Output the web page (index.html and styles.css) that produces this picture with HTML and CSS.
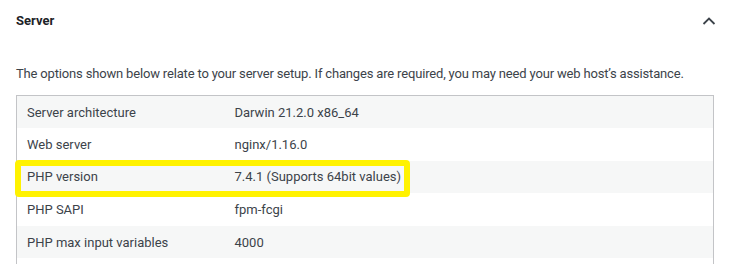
FILE: index.html
```html
<!doctype html>
<html lang="en">
  <head>
    <meta charset="UTF-8" />
    <title>Site Health - Server</title>
    <link rel="stylesheet" href="styles.css">
  </head>
  <body>
    <div class="panel">
      <div class="panel-header">
        <h2 class="panel-title">Server</h2>
        <svg class="chevron" width="14" height="9" viewBox="0 0 14 9">
          <path d="M1.5 8 L7 2.5 L12.5 8" fill="none" stroke="#3c434a" stroke-width="1.8" />
        </svg>
      </div>

      <p class="description">
        The options shown below relate to your server setup. If changes are required, you may need your web host’s assistance.
      </p>

      <div class="table-wrap">
        <table class="info-table">
          <tbody>
            <tr>
              <td class="label">Server architecture</td>
              <td>Darwin 21.2.0 x86_64</td>
            </tr>
            <tr>
              <td class="label">Web server</td>
              <td>nginx/1.16.0</td>
            </tr>
            <tr>
              <td class="label">PHP version</td>
              <td>7.4.1 (Supports 64bit values)</td>
            </tr>
            <tr>
              <td class="label">PHP SAPI</td>
              <td>fpm-fcgi</td>
            </tr>
            <tr>
              <td class="label">PHP max input variables</td>
              <td>4000</td>
            </tr>
            <tr>
              <td class="label">PHP time limit</td>
              <td>0</td>
            </tr>
          </tbody>
        </table>
        <!-- yellow annotation around the PHP version row -->
        <div class="annotation"></div>
      </div>
    </div>
  </body>
</html>
```

FILE: styles.css
```css
* {
  margin: 0;
  padding: 0;
  box-sizing: border-box;
}

body {
  font-family: "Roboto", "Liberation Sans", sans-serif;
  font-size: 13px;
  color: #3c434a;
  background: #fff;
  -webkit-font-smoothing: antialiased;
}

.panel {
  padding: 0 16px;
}

.panel-header {
  display: flex;
  justify-content: space-between;
  align-items: center;
  height: 40px;
}

.panel-title {
  font-size: 13px;
  font-weight: 700;
  color: #1d2327;
}

.chevron {
  margin-right: -2px;
}

.description {
  margin-top: 24px;
  line-height: 20px;
  letter-spacing: -0.17px;
  white-space: nowrap;
  color: #3c434a;
}

.table-wrap {
  position: relative;
  width: 698px;
  margin-top: 11px;
}

.info-table {
  width: 100%;
  border: 1px solid #c3c4c7;
  border-collapse: collapse;
}

.info-table td {
  height: 32.6px;
  padding: 0 10px;
  vertical-align: middle;
  white-space: nowrap;
}

.info-table td.label {
  width: 208px;
}

.info-table tr:nth-child(odd) {
  background: #f6f7f7;
}

.annotation {
  position: absolute;
  left: -1px;
  top: 65px;
  width: 395px;
  height: 37px;
  border: 6px solid #fff200;
  border-radius: 4px;
  pointer-events: none;
}
```
